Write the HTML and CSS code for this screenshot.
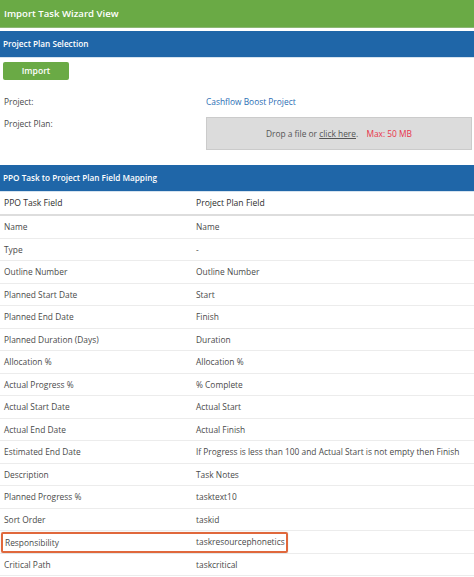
FILE: index.html
```html
<!DOCTYPE html>
<html>
<head>
<meta charset="utf-8">
<link rel="stylesheet" href="styles.css">
</head>
<body>
<div class="page">
  <div class="title-bar">Import Task Wizard View</div>
  <div class="section-bar">Project Plan Selection</div>
  <div class="btn-row"><button class="btn">Import</button></div>
  <div class="form">
    <div class="form-row">
      <div class="label">Project:</div>
      <div class="value"><a class="link">Cashflow Boost Project</a></div>
    </div>
    <div class="form-row plan">
      <div class="label">Project Plan:</div>
      <div class="value">
        <div class="dropzone">Drop a file or <span class="u">click here</span>. <span class="max">Max: 50 MB</span></div>
      </div>
    </div>
  </div>
  <div class="section-bar second">PPO Task to Project Plan Field Mapping</div>
  <table class="map">
    <thead>
      <tr><th>PPO Task Field</th><th>Project Plan Field</th></tr>
    </thead>
    <tbody>
      <tr><td>Name</td><td>Name</td></tr>
      <tr><td>Type</td><td>-</td></tr>
      <tr><td>Outline Number</td><td>Outline Number</td></tr>
      <tr><td>Planned Start Date</td><td>Start</td></tr>
      <tr><td>Planned End Date</td><td>Finish</td></tr>
      <tr><td>Planned Duration (Days)</td><td>Duration</td></tr>
      <tr><td>Allocation %</td><td>Allocation %</td></tr>
      <tr><td>Actual Progress %</td><td>% Complete</td></tr>
      <tr><td>Actual Start Date</td><td>Actual Start</td></tr>
      <tr><td>Actual End Date</td><td>Actual Finish</td></tr>
      <tr><td>Estimated End Date</td><td>If Progress is less than 100 and Actual Start is not empty then Finish</td></tr>
      <tr><td>Description</td><td>Task Notes</td></tr>
      <tr><td>Planned Progress %</td><td>tasktext10</td></tr>
      <tr><td>Sort Order</td><td>taskid</td></tr>
      <tr class="hl"><td><span class="box">Responsibility</span></td><td>taskresourcephonetics</td></tr>
      <tr><td>Critical Path</td><td>taskcritical</td></tr>
    </tbody>
  </table>
</div>
</body>
</html>
```
FILE: styles.css
```css
html, body {
  margin: 0;
  padding: 0;
  background: #ffffff;
}
.page {
  width: 474px;
  font-family: "Open Sans", "Noto Sans", sans-serif;
  font-size: 8.4px;
  color: #4a4a4a;
  overflow: hidden;
}
.title-bar {
  height: 27px;
  line-height: 27px;
  background: #6aaa45;
  color: #ffffff;
  font-weight: 600;
  font-size: 9.6px;
  padding-left: 4px;
  border-bottom: 1px solid #8cb873;
}
.section-bar {
  height: 27px;
  line-height: 26px;
  background: #1f66a8;
  color: #ffffff;
  font-weight: 600;
  font-size: 8.2px;
  padding-left: 3px;
  margin-top: 3px;
  border-bottom: 1px solid #d6e3ef;
  box-sizing: border-box;
}
.section-bar.second {
  margin-top: 15px;
  height: 27px;
}
.btn-row {
  padding: 4px 0 0 3px;
}
.btn {
  display: block;
  width: 66px;
  height: 18px;
  border: none;
  border-radius: 2px;
  background: #6aaa45;
  color: #ffffff;
  font-family: inherit;
  font-weight: 600;
  font-size: 8.6px;
  padding: 0;
}
.form {
  padding-top: 12px;
}
.form-row {
  display: flex;
  align-items: flex-start;
}
.form-row .label {
  width: 202px;
  padding-left: 4px;
  line-height: 20px;
}
.form-row .value {
  flex: 1;
  line-height: 20px;
}
.form-row.plan {
  margin-top: 5px;
}
.form-row.plan .label {
  line-height: 14px;
}
.link {
  color: #2a6db4;
}
.dropzone {
  height: 33px;
  box-sizing: border-box;
  margin-right: 2px;
  background: #dcdcdc;
  border: 1px solid #cbcbcb;
  text-align: center;
  line-height: 31px;
  color: #555555;
}
.dropzone .u {
  text-decoration: underline;
}
.dropzone .max {
  color: #e8334a;
  margin-left: 6px;
}
.map {
  width: 474px;
  border-collapse: collapse;
  table-layout: fixed;
}
.map th {
  text-align: left;
  font-weight: 500;
  font-size: 8.6px;
  color: #2e2e2e;
  height: 22px;
  padding: 0 0 0 4px;
  border-bottom: 2px solid #dddddd;
}
.map th:first-child, .map td:first-child {
  width: 188px;
}
.map td {
  height: 21.5px;
  padding: 0 0 0 4px;
  border-bottom: 1px solid #ececec;
  white-space: nowrap;
}
.map tr.hl td {
  position: relative;
}
.map tr.hl td:first-child .box {
  position: absolute;
  left: 1px;
  top: 1px;
  width: 281px;
  height: 17px;
  line-height: 17px;
  padding-left: 2px;
  border: 2px solid #e0683c;
  border-radius: 2px;
  box-shadow: 0 0 1px rgba(0,0,0,0.3);
}
```
